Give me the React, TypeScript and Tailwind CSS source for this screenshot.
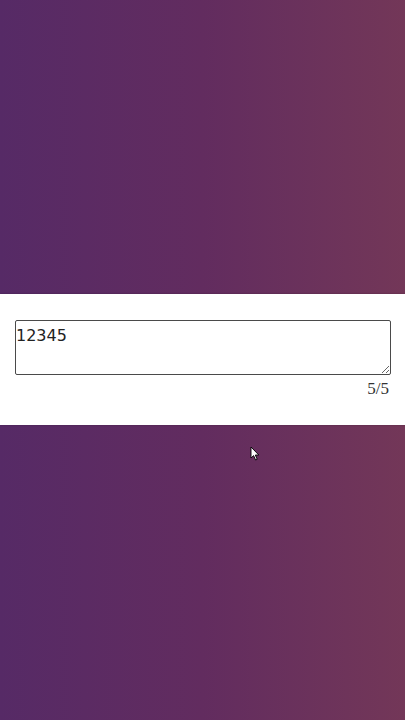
import { useState } from "react";

export default function App() {
  const [value, setValue] = useState("12345");
  const max = 5;

  return (
    <div className="relative min-h-screen bg-gradient-to-r from-[#562a66] via-[#622c5f] to-[#733758] pt-[294px]">
      <div className="h-[131px] w-full bg-white pl-[15px] pr-[14px] pt-[26px] shadow-[0_0_2px_rgba(0,0,0,0.25)]">
        <textarea
          value={value}
          maxLength={max}
          onChange={(e) => setValue(e.target.value)}
          className="block h-[55px] w-full rounded-[2px] border border-[#4a4a4a] px-0 pt-[5px] [font-family:'DejaVu_Sans',sans-serif] text-[16px] leading-[19px] text-[#222] outline-none"
        />
        <div className="mt-[4px] pr-[2px] text-right [font-family:'Liberation_Serif',serif] text-[17px] leading-[19px] text-[#333]">
          {value.length}/{max}
        </div>
      </div>

      {/* mouse pointer */}
      <svg className="absolute left-[250px] top-[446px]" width="10" height="15" viewBox="0 0 10 15">
        <path d="M1 1 L1 12 L3.6 9.6 L5.6 14 L7.2 13.3 L5.3 9 L8.8 9 Z" fill="#fff" stroke="#000" strokeWidth="0.9" />
      </svg>
    </div>
  );
}
